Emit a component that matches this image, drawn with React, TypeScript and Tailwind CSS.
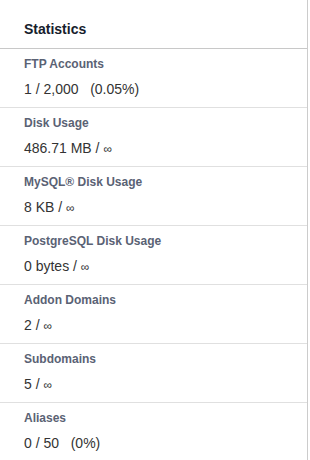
import React from 'react'

const Inf = () => <span className="text-[12px] leading-none">∞</span>

const stats = [
    { label: 'FTP Accounts', value: <>1 / 2,000{'\u00a0\u00a0\u00a0'}(0.05%)</> },
    { label: 'Disk Usage', value: <>486.71 MB / <Inf /></> },
    { label: 'MySQL® Disk Usage', value: <>8 KB / <Inf /></> },
    { label: 'PostgreSQL Disk Usage', value: <>0 bytes / <Inf /></> },
    { label: 'Addon Domains', value: <>2 / <Inf /></> },
    { label: 'Subdomains', value: <>5 / <Inf /></> },
    { label: 'Aliases', value: <>0 / 50{'\u00a0\u00a0\u00a0'}(0%)</> },
]

export default function App() {
    return (
        <div className="h-[460px] w-[310px] overflow-hidden bg-white" style={{ fontFamily: '"Liberation Sans", Arial, sans-serif' }}>
            <section className="h-full w-[308px] border-r border-[#cccccc]">
                <div className="border-b border-[#c8c8c8] px-6 pt-[19px] pb-[9px]">
                    <h2 className="text-[14px] font-bold leading-5 text-[#16202c]">Statistics</h2>
                </div>
                {stats.map((s) => (
                    <div key={s.label} className="border-b border-[#e0e0e0] px-6 pt-[7px] pb-2">
                        <p className="text-[12px] font-bold leading-4 text-[#5a6274]">{s.label}</p>
                        <p className="mt-[7px] h-5 text-[14px] leading-5 text-[#333333] whitespace-pre">{s.value}</p>
                    </div>
                ))}
            </section>
        </div>
    )
}
